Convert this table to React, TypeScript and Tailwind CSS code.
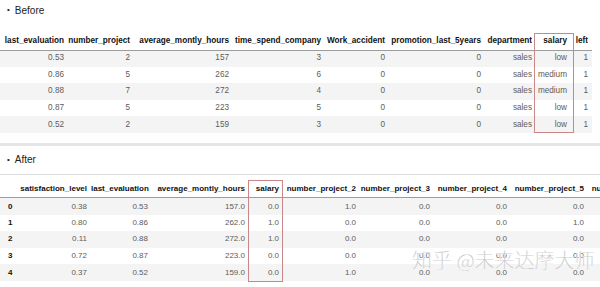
import React from "react";

const beforeCols = [
  { name: "last_evaluation", w: 68 },
  { name: "number_project", w: 66 },
  { name: "average_montly_hours", w: 99 },
  { name: "time_spend_company", w: 92 },
  { name: "Work_accident", w: 64 },
  { name: "promotion_last_5years", w: 96 },
  { name: "department", w: 51 },
  { name: "salary", w: 35 },
  { name: "left", w: 21 },
];

const beforeRows = [
  ["0.53", "2", "157", "3", "0", "0", "sales", "low", "1"],
  ["0.86", "5", "262", "6", "0", "0", "sales", "medium", "1"],
  ["0.88", "7", "272", "4", "0", "0", "sales", "medium", "1"],
  ["0.87", "5", "223", "5", "0", "0", "sales", "low", "1"],
  ["0.52", "2", "159", "3", "0", "0", "sales", "low", "1"],
];

const afterCols = [
  { name: "", w: 20 },
  { name: "satisfaction_level", w: 71 },
  { name: "last_evaluation", w: 61 },
  { name: "average_montly_hours", w: 97 },
  { name: "salary", w: 34 },
  { name: "number_project_2", w: 77 },
  { name: "number_project_3", w: 74 },
  { name: "number_project_4", w: 77 },
  { name: "number_project_5", w: 77 },
  { name: "number_project_6", w: 77 },
];

const afterRows = [
  ["0", "0.38", "0.53", "157.0", "0.0", "1.0", "0.0", "0.0", "0.0", "0.0"],
  ["1", "0.80", "0.86", "262.0", "1.0", "0.0", "0.0", "0.0", "1.0", "0.0"],
  ["2", "0.11", "0.88", "272.0", "1.0", "0.0", "0.0", "0.0", "0.0", "0.0"],
  ["3", "0.72", "0.87", "223.0", "0.0", "0.0", "0.0", "0.0", "0.0", "0.0"],
  ["4", "0.37", "0.52", "159.0", "0.0", "1.0", "0.0", "0.0", "0.0", "0.0"],
];

const Bullet = ({ label }: { label: string }) => (
  <div className="flex items-center gap-[5px] pl-[7px] text-[10px] text-[#222]">
    <span className="text-[8px]">•</span>
    <span>{label}</span>
  </div>
);

export default function App() {
  return (
    <div
      className="w-[600px] h-[287px] bg-white overflow-hidden flex flex-col"
      style={{ fontFamily: '"Liberation Sans", Arial, sans-serif' }}
    >
      {/* Before */}
      <div className="h-[20px] flex items-center">
        <Bullet label="Before" />
      </div>
      <div className="relative mt-[13px] w-[592px]">
        <table className="table-fixed border-collapse w-[592px] text-[8.2px]">
          <colgroup>
            {beforeCols.map((c) => (
              <col key={c.name} style={{ width: c.w }} />
            ))}
          </colgroup>
          <thead>
            <tr className="h-[17px] border-b border-[#9c9c9c]">
              {beforeCols.map((c) => (
                <th key={c.name} className="text-right font-bold text-[#111] pr-[4px] whitespace-nowrap">
                  {c.name}
                </th>
              ))}
            </tr>
          </thead>
          <tbody>
            {beforeRows.map((r, i) => (
              <tr key={i} className={`h-[16.6px] ${i % 2 === 0 ? "bg-[#f4f4f4]" : "bg-white"}`}>
                {r.map((v, j) => (
                  <td key={j} className="text-right text-[#5c5c5c] pr-[4px] whitespace-nowrap">
                    {v}
                  </td>
                ))}
              </tr>
            ))}
          </tbody>
        </table>
        <div className="absolute left-[534px] top-0 w-[40px] h-[100px] border border-[#c98787]" />
      </div>

      <div className="mt-[10px] h-[3px] bg-[#e6e6e6]" />

      {/* After */}
      <div className="h-[28px] flex items-center">
        <Bullet label="After" />
      </div>
      <div className="h-px bg-[#dcdcdc]" />
      <div className="relative mt-[6px] w-[665px]">
        <table className="table-fixed border-collapse w-[665px] text-[8px]">
          <colgroup>
            {afterCols.map((c, i) => (
              <col key={i} style={{ width: c.w }} />
            ))}
          </colgroup>
          <thead>
            <tr className="h-[17px] border-b border-[#9c9c9c]">
              {afterCols.map((c, i) => (
                <th key={i} className="text-right font-bold text-[#111] pr-[4px] whitespace-nowrap overflow-hidden">
                  {c.name}
                </th>
              ))}
            </tr>
          </thead>
          <tbody>
            {afterRows.map((r, i) => (
              <tr key={i} className={`h-[16.6px] ${i % 2 === 0 ? "bg-[#f4f4f4]" : "bg-white"}`}>
                {r.map((v, j) =>
                  j === 0 ? (
                    <td key={j} className="text-left font-bold text-[#111] pl-[8px]">
                      {v}
                    </td>
                  ) : (
                    <td key={j} className="text-right text-[#5c5c5c] pr-[4px] whitespace-nowrap">
                      {v}
                    </td>
                  )
                )}
              </tr>
            ))}
          </tbody>
        </table>
        <div className="absolute left-[248px] top-[-1px] w-[35px] h-[102px] border border-[#c98787]" />
        <div
          className="absolute left-[412px] top-[64px] text-[20px] text-[#b9b9b9] whitespace-nowrap"
          style={{
            fontFamily: '"Noto Sans CJK SC", sans-serif',
            fontWeight: 300,
            WebkitTextStroke: "0.3px #ffffff",
          }}
        >
          知乎 @未来达摩大师
        </div>
      </div>
    </div>
  );
}
